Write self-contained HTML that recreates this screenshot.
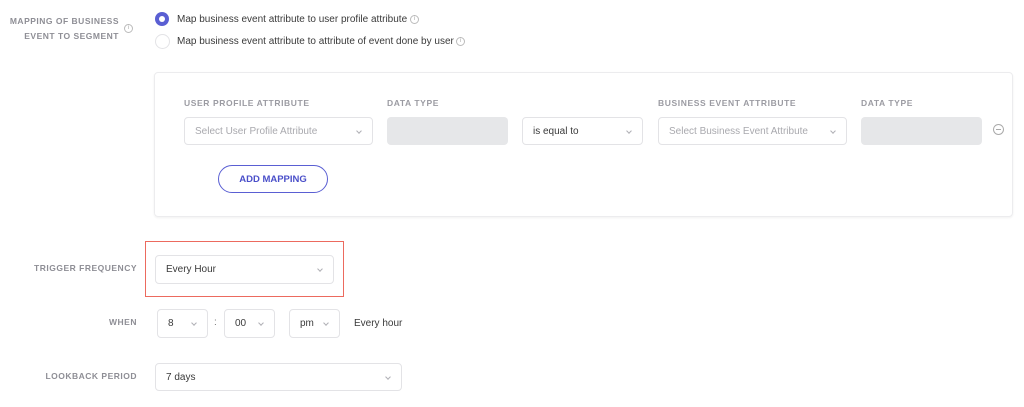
<!DOCTYPE html>
<html><head><style>
body{margin:0;width:1024px;height:407px;background:#fff;font-family:"Liberation Sans",sans-serif;position:relative;overflow:hidden}
.a{position:absolute}
.lbl{position:absolute;font-size:8.5px;letter-spacing:0.5px;color:#8e8e95;font-weight:bold;text-align:right;line-height:15px}
.hd{position:absolute;font-size:8.5px;letter-spacing:0.6px;color:#9b9ba2;font-weight:bold}
.sel{position:absolute;box-sizing:border-box;border:1px solid #e3e3e6;border-radius:4px;background:#fff;font-size:10px;color:#3a3a3a;line-height:26px;padding-top:1px;padding-left:10px}
.sel.ph{color:#a9a9ae}
.sel:after{content:"";position:absolute;right:11px;top:11px;width:3px;height:3px;border-right:1px solid #b0b0b5;border-bottom:1px solid #b0b0b5;transform:rotate(45deg)}
.gray{position:absolute;background:#e6e7e9;border-radius:4px}
.t{position:absolute;font-size:10px;color:#3a3a3a;white-space:nowrap}
.info{position:absolute;width:7px;height:7px;border:1px solid #bbb;border-radius:50%;font-size:6px;color:#aaa;text-align:center;line-height:7px}
</style></head><body>
<div class="lbl" style="right:905px;top:14px;width:150px">MAPPING OF BUSINESS<br>EVENT TO SEGMENT</div>
<div class="info" style="left:124px;top:24px">i</div>
<div class="a" style="left:155px;top:12px;width:14px;height:14px;border-radius:50%;background:#5a5fd3"></div>
<div class="a" style="left:159px;top:16px;width:6px;height:6px;border-radius:50%;background:#fff"></div>
<div class="t" style="left:177px;top:14px">Map business event attribute to user profile attribute</div>
<div class="info" style="left:410px;top:15px">i</div>
<div class="a" style="left:155px;top:34px;width:13px;height:13px;border-radius:50%;border:1px solid #e3e3e6"></div>
<div class="t" style="left:177px;top:36px">Map business event attribute to attribute of event done by user</div>
<div class="info" style="left:456px;top:37px">i</div>

<div class="a" style="left:154px;top:72px;width:857px;height:143px;border:1px solid #ececee;border-radius:4px;box-shadow:0 1px 2px rgba(0,0,0,0.06)"></div>
<div class="hd" style="left:184px;top:98px">USER PROFILE ATTRIBUTE</div>
<div class="hd" style="left:387px;top:98px">DATA TYPE</div>
<div class="hd" style="left:658px;top:98px">BUSINESS EVENT ATTRIBUTE</div>
<div class="hd" style="left:861px;top:98px">DATA TYPE</div>
<div class="sel ph" style="left:184px;top:117px;width:189px;height:28px">Select User Profile Attribute</div>
<div class="gray" style="left:387px;top:117px;width:121px;height:28px"></div>
<div class="sel" style="left:522px;top:117px;width:121px;height:28px">is equal to</div>
<div class="sel ph" style="left:658px;top:117px;width:189px;height:28px">Select Business Event Attribute</div>
<div class="gray" style="left:861px;top:117px;width:121px;height:28px"></div>
<div class="a" style="left:993px;top:124px;width:9px;height:9px;border:1px solid #aaa;border-radius:50%"></div>
<div class="a" style="left:996px;top:129px;width:5px;height:1px;background:#aaa"></div>
<div class="a" style="left:218px;top:165px;width:108px;height:26px;border:1.5px solid #5a5fd3;border-radius:14px;color:#4a4fc9;font-size:9.5px;font-weight:bold;text-align:center;line-height:27px">ADD MAPPING</div>

<div class="a" style="left:145px;top:241px;width:197px;height:54px;border:1.5px solid #ec6a5e"></div>
<div class="lbl" style="right:887px;top:261px;width:150px">TRIGGER FREQUENCY</div>
<div class="sel" style="left:155px;top:255px;width:179px;height:29px">Every Hour</div>
<div class="lbl" style="right:887px;top:315px;width:150px">WHEN</div>
<div class="sel" style="left:157px;top:309px;width:51px;height:29px">8</div>
<div class="t" style="left:214px;top:317px;color:#777">:</div>
<div class="sel" style="left:224px;top:309px;width:51px;height:29px">00</div>
<div class="sel" style="left:289px;top:309px;width:51px;height:29px">pm</div>
<div class="t" style="left:354px;top:318px">Every hour</div>
<div class="lbl" style="right:887px;top:369px;width:150px">LOOKBACK PERIOD</div>
<div class="sel" style="left:155px;top:363px;width:247px;height:28px">7 days</div>
</body></html>
